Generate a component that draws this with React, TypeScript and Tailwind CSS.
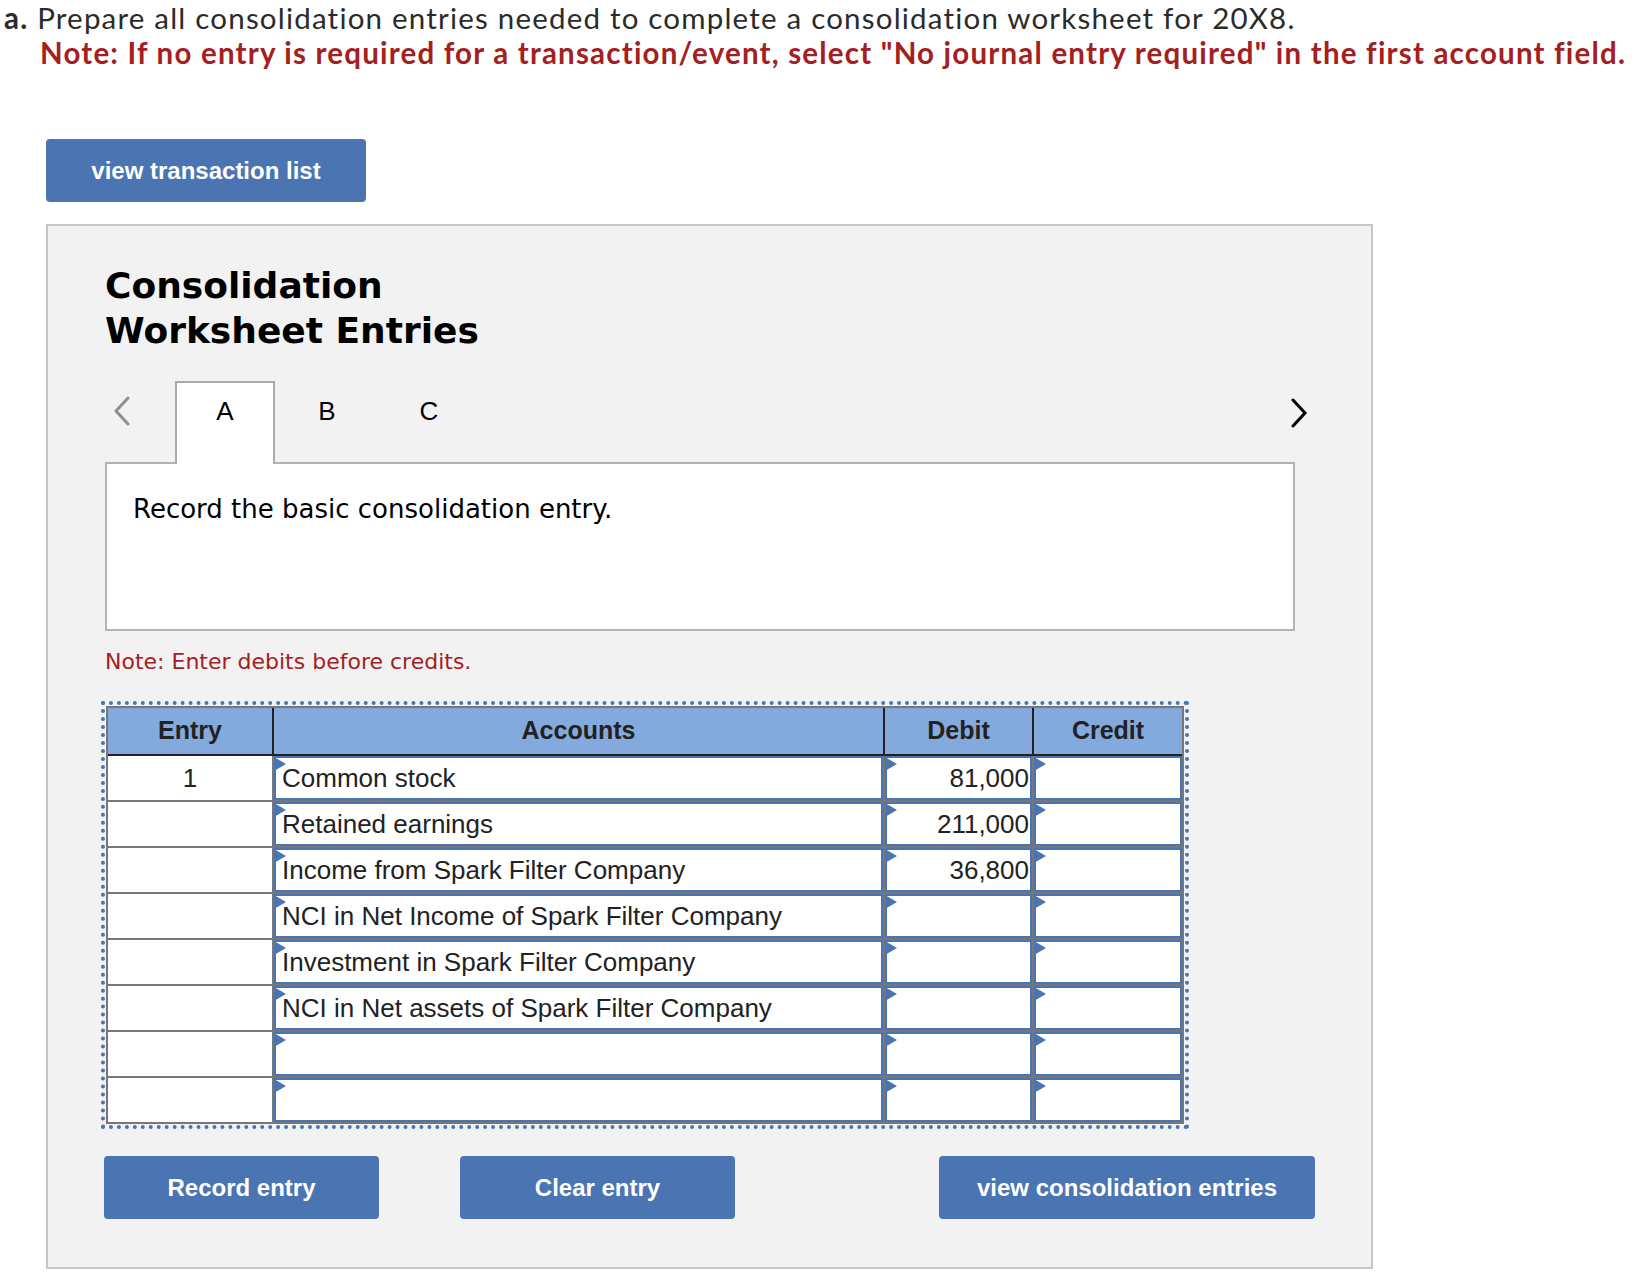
import React from 'react'

type Row = {
  entry: string
  account: string
  debit: string
  credit: string
}

const rows: Row[] = [
  { entry: '1', account: 'Common stock', debit: '81,000', credit: '' },
  { entry: '', account: 'Retained earnings', debit: '211,000', credit: '' },
  { entry: '', account: 'Income from Spark Filter Company', debit: '36,800', credit: '' },
  { entry: '', account: 'NCI in Net Income of Spark Filter Company', debit: '', credit: '' },
  { entry: '', account: 'Investment in Spark Filter Company', debit: '', credit: '' },
  { entry: '', account: 'NCI in Net assets of Spark Filter Company', debit: '', credit: '' },
  { entry: '', account: '', debit: '', credit: '' },
  { entry: '', account: '', debit: '', credit: '' },
]

function InputCell({ value, right, last }: { value: string; right?: boolean; last?: boolean }) {
  return (
    <div className={`h-[46px] border-b-2 border-[#777] ${last ? '' : 'border-r-2'}`}>
      <div
        className={`relative flex h-full items-center border-2 border-[#4a74b2] bg-white ${
          right ? 'justify-end pr-[1px]' : 'pl-[6px]'
        }`}
      >
        <span className="absolute -left-[2px] -top-[1px] h-0 w-0 border-y-[7px] border-l-[12px] border-y-transparent border-l-[#4a74b2]" />
        <span className="whitespace-nowrap">{value}</span>
      </div>
    </div>
  )
}

function Tab({ label, active }: { label: string; active?: boolean }) {
  if (active) {
    return (
      <div className="relative z-10 h-[83px] w-[100px] border-2 border-b-0 border-[#aaa] bg-white pt-[13px] text-center leading-[30px]">
        {label}
      </div>
    )
  }
  return <div className="w-[102px] pt-[15px] text-center leading-[30px]">{label}</div>
}

export default function App() {
  return (
    <div className="min-h-[1286px] w-[1642px] bg-white text-[#222]">
      <div className="pl-[4px] font-['Lato',sans-serif] text-[29.5px] leading-[35px] tracking-[1.2px]">
        <p className="text-[#2b2b2b]">
          <span className="font-bold">a.</span> Prepare all consolidation entries needed to complete a
          consolidation worksheet for 20X8.
        </p>
        <p className="pl-[36px] font-bold text-[#a4201f]">
          Note: If no entry is required for a transaction/event, select "No journal entry required" in
          the first account field.
        </p>
      </div>

      <div className="pl-[46px] font-['Liberation_Sans',Arial,sans-serif]">
        <button className="mt-[69px] h-[63px] w-[320px] rounded-[4px] bg-[#4a74b2] text-[24px] font-bold text-white">
          view transaction list
        </button>

        <section className="mt-[22px] h-[1045px] w-[1327px] border-2 border-[#c6c6c6] bg-[#f2f2f2] pl-[57px] pt-[37px]">
          <h2 className="font-['DejaVu_Sans',Verdana,sans-serif] text-[36px] font-bold leading-[45px] text-black">
            Consolidation
            <br />
            Worksheet Entries
          </h2>

          {/* tabs */}
          <div className="mt-[28px] flex h-[81px] w-[1203px] items-start text-[26px] text-black">
            <div className="w-[70px] pl-[8px] pt-[15px]">
              <svg width="18" height="30" viewBox="0 0 18 30">
                <polyline
                  points="15,2 3,15 15,28"
                  fill="none"
                  stroke="#8f8f8f"
                  strokeWidth="3"
                  strokeLinecap="round"
                  strokeLinejoin="round"
                />
              </svg>
            </div>
            <Tab label="A" active />
            <div className="w-[1px]" />
            <Tab label="B" />
            <Tab label="C" />
            <div className="ml-auto pt-[17px]">
              <svg width="18" height="30" viewBox="0 0 18 30">
                <polyline
                  points="3,2 15,15 3,28"
                  fill="none"
                  stroke="#000"
                  strokeWidth="3"
                  strokeLinecap="round"
                  strokeLinejoin="miter"
                />
              </svg>
            </div>
          </div>

          <div className="h-[169px] w-[1190px] border-2 border-[#b3b3b3] bg-white pl-[26px] pt-[30px] font-['DejaVu_Sans',Verdana,sans-serif] text-[26px] leading-[30px] text-black">
            Record the basic consolidation entry.
          </div>

          <p className="mt-[18px] font-['DejaVu_Sans',Verdana,sans-serif] text-[22px] leading-[26px] text-[#a4201f]">
            Note: Enter debits before credits.
          </p>

          {/* journal table */}
          <div className="-ml-[4px] mt-[26px] w-[1088px] border-4 border-dotted border-[#4a74b2] p-[1px]">
            <div className="grid grid-cols-[166px_611px_149px_148px] border-x-2 border-t-2 border-[#777] text-[26px] text-[#222]">
              {['Entry', 'Accounts', 'Debit', 'Credit'].map((h, i) => (
                <div
                  key={h}
                  className={`flex h-[48px] items-center justify-center border-b-2 border-[#222] bg-[#84a9dd] text-[25px] font-bold ${
                    i < 3 ? 'border-r-2' : ''
                  }`}
                >
                  {h}
                </div>
              ))}

              {rows.map((r, i) => (
                <React.Fragment key={i}>
                  <div className="flex h-[46px] items-center justify-center border-b-2 border-r-2 border-[#777] bg-white">
                    {r.entry}
                  </div>
                  <InputCell value={r.account} />
                  <InputCell value={r.debit} right />
                  <InputCell value={r.credit} right last />
                </React.Fragment>
              ))}
            </div>
          </div>

          <div className="mt-[27px] flex text-[24px] font-bold text-white">
            <button className="-ml-[1px] h-[63px] w-[275px] rounded-[4px] bg-[#4a74b2]">Record entry</button>
            <button className="ml-[81px] h-[63px] w-[275px] rounded-[4px] bg-[#4a74b2]">Clear entry</button>
            <button className="ml-[204px] h-[63px] w-[376px] rounded-[4px] bg-[#4a74b2]">
              view consolidation entries
            </button>
          </div>
        </section>
      </div>
    </div>
  )
}
